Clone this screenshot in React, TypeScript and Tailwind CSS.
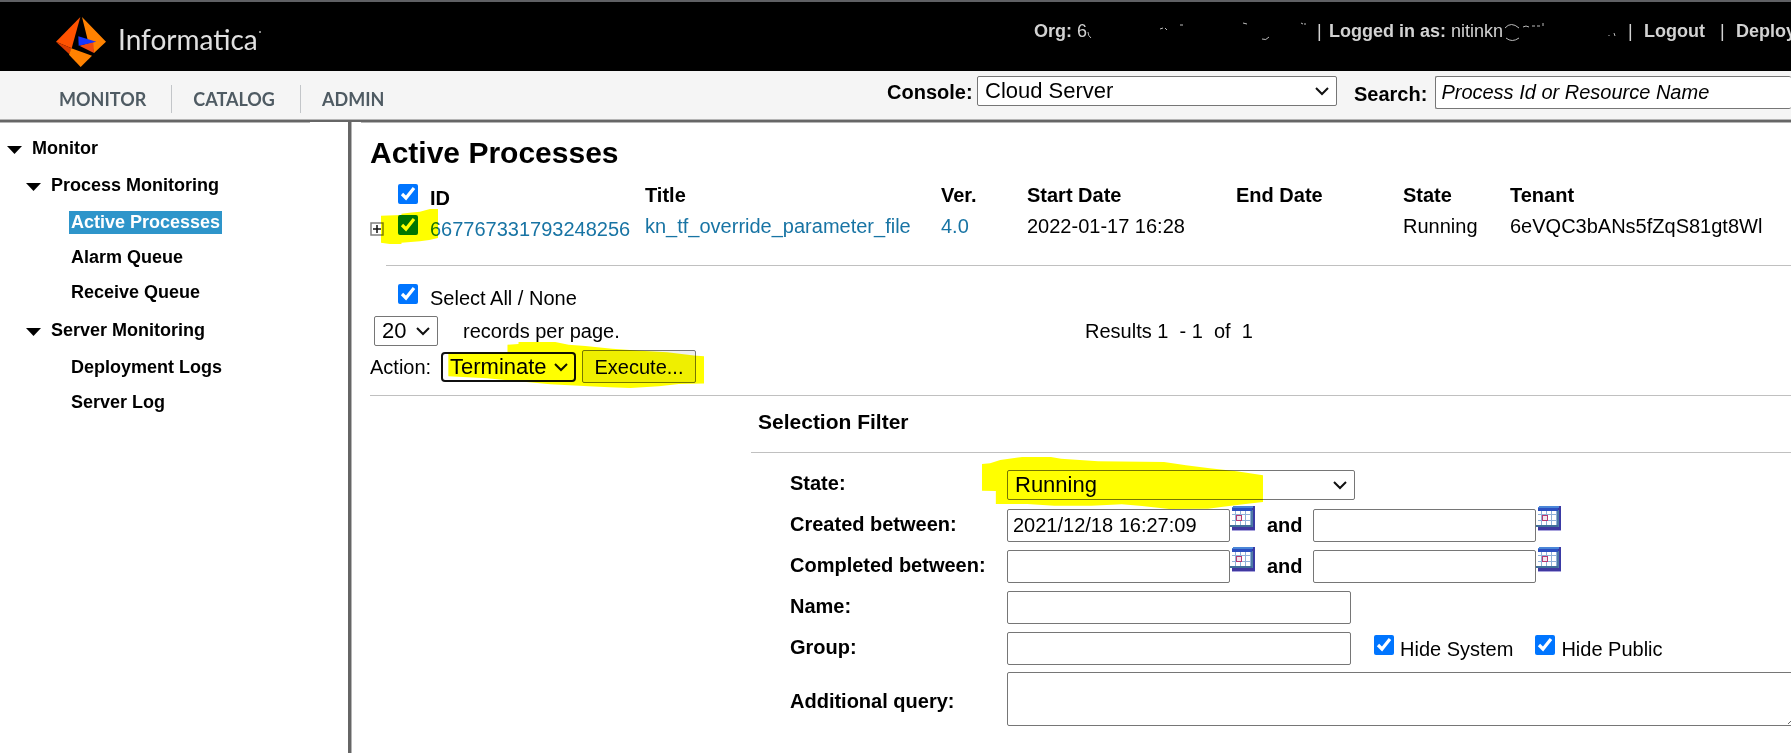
import { useState, type ReactNode } from 'react';

const field = 'border border-[#767676] rounded-xs bg-white text-xl px-[5px] outline-none';

const navLinks = ['MONITOR', 'CATALOG', 'ADMIN'];

const tree = [
  { title: 'Process Monitoring', items: ['Active Processes', 'Alarm Queue', 'Receive Queue'] },
  { title: 'Server Monitoring', items: ['Deployment Logs', 'Server Log'] },
];

const columns = [
  { title: 'Title', width: 'w-[296px]' },
  { title: 'Ver.', width: 'w-[86px]' },
  { title: 'Start Date', width: 'w-[209px]' },
  { title: 'End Date', width: 'w-[167px]' },
  { title: 'State', width: 'w-[107px]' },
  { title: 'Tenant', width: '' },
];

function Logo() {
  return (
    <svg viewBox="0 0 150 150" className="size-[50px]" aria-hidden="true">
      <path d="M73 0 0 74l47 20z" fill="#ff5200" />
      <path d="M0 74l40 38 7-18z" fill="#dc3c00" />
      <path d="M78 0l72 74-36 34-8-36-11-4z" fill="#ff8200" />
      <path d="M70 86l42-12 2 34z" fill="#f04a10" />
      <path d="M67 58l54 16-53 12z" fill="#1437ff" />
      <path d="M46 94l62 22-34 34-35-37z" fill="#ff8200" />
    </svg>
  );
}

function Chevron() {
  return (
    <svg viewBox="0 0 14 9" className="absolute right-2 top-1/2 -mt-1 w-3.5 h-[9px] pointer-events-none" fill="none" stroke="#111" strokeWidth="2" aria-hidden="true">
      <path d="M1 1l6 6 6-6" />
    </svg>
  );
}

function Select({ id, value, className, label }: { id?: string; value: string; className: string; label?: string }) {
  return (
    <span className="relative block shrink-0">
      <select id={id} aria-label={label} defaultValue={value} className={`appearance-none h-[30px] pl-[7px] pr-6 text-[22px] leading-6 bg-white block outline-none ${className}`}>
        <option>{value}</option>
      </select>
      <Chevron />
    </span>
  );
}

function Check({ label, gap, children }: { label?: string; gap: string; children?: ReactNode }) {
  return (
    <label className={`flex items-center ${gap}`}>
      <input type="checkbox" defaultChecked aria-label={label} className="size-5 mb-1 shrink-0" />
      {children && <span className="pt-1">{children}</span>}
    </label>
  );
}

function Caret({ open }: { open: boolean }) {
  return (
    <svg viewBox="0 0 15 8" className={`w-[15px] h-2 mt-1 shrink-0 ${open ? '' : '-rotate-90'}`} aria-hidden="true">
      <path d="M0 0h15L7.500 8z" />
    </svg>
  );
}

function CalendarIcon() {
  return (
    <svg viewBox="0 0 25 25" className="size-[25px]" shapeRendering="crispEdges" aria-hidden="true">
      <path d="M3 0h22v24H2V3z" fill="#3a3aa5" />
      <path d="M3 0h20v2H2z" fill="#4a86d8" />
      <path d="M2 2h20v3H2z" fill="#2c4fc0" />
      <path d="M2 5h19v14H2z" fill="#8fb0d8" />
      <path d="M21 5l2-2v18h-2z" fill="#4f7ba6" />
      <path d="M2 21h21v3H2z" fill="#4038a0" />
      <path d="M0 19h22v2H0z" fill="#416f99" />
      <g fill="#fff">
        <path d="M2 5h3v3H2zM6 5h4v3H6zM11 5h4v3h-4zM16 5h4v3h-4z" />
        <path d="M2 9h3v5H2zM6 9h4v5H6zM11 9h4v5h-4zM16 9h4v5h-4z" />
        <path d="M2 15h3v4H2zM6 15h4v4H6zM11 15h4v4h-4zM16 15h4v4h-4z" />
      </g>
      <path d="M6 9h6v6H6z" fill="#b83a72" />
      <path d="M7 10h4v4H7z" fill="#f3e6ee" />
      <path d="M2 24h23v1H2z" fill="#a9a3dd" />
    </svg>
  );
}

function Marker({ box, points, className }: { box: string; points: string; className: string }) {
  return (
    <svg viewBox={box} preserveAspectRatio="none" className={`absolute mix-blend-multiply pointer-events-none ${className}`} aria-hidden="true">
      <polygon points={points} fill="#ff0" />
    </svg>
  );
}

function DateRange({ label, from }: { label: string; from?: string }) {
  return (
    <>
      <input id={label} type="text" defaultValue={from} className={`${field} w-[223px] h-[33px]`} />
      <button aria-label={`${label} start`} className="self-start pt-px"><CalendarIcon /></button>
      <span className="font-bold pl-3 pr-2.5 pb-0.5">and</span>
      <input type="text" aria-label={`${label} end`} className={`${field} w-[223px] h-[33px]`} />
      <button aria-label={`${label} end date`} className="self-start pt-px"><CalendarIcon /></button>
    </>
  );
}

function FilterRow({ label, htmlFor, children }: { label: string; htmlFor: string; children: ReactNode }) {
  return (
    <div className="flex items-center h-[41px]">
      <label htmlFor={htmlFor} className="w-[217px] shrink-0 font-bold pb-1">{label}</label>
      {children}
    </div>
  );
}

function Header() {
  return (
    <header className="bg-black border-t-2 border-[#5f6064] h-[71px] flex items-center justify-between pl-14 overflow-hidden">
      <div className="flex items-center gap-3 pt-2.5">
        <Logo />
        <span className="flex font-[Lato,sans-serif] text-[28px] leading-8 text-[#e0e0e0] pb-1.5">
          Informatica
          <svg viewBox="0 0 4 32" className="w-1 h-8" aria-hidden="true"><path d="M1 8h2v2H1z" fill="#888" /></svg>
        </span>
      </div>
      <div className="flex shrink-0 text-lg leading-6 text-[#d2d2d2] whitespace-nowrap pb-3 -mr-[5px]">
        <span className="w-[283px] flex">
          <b className="pr-[5px]">Org:</b>6
          <svg viewBox="0 0 222 24" className="w-[222px] h-6" stroke="#bbb" strokeWidth="1" fill="none" aria-hidden="true">
            <path d="M1 13q0 4 3 6M73 10l3-1M78 9l2 2M93 6h3M156 4l4 1M175 20q4 2 7-2M214 4l2 1M218 4v2" />
          </svg>
        </span>
        <span className="w-3">|</span>
        <span className="w-[299px] flex">
          <b className="pr-[5px]">Logged in as:</b>nitinkn
          <svg viewBox="0 0 120 24" className="w-[120px] h-6" stroke="#bbb" strokeWidth="1" fill="none" aria-hidden="true">
            <path d="M2 9q6-7 14 0M3 19q6 5 13 0M20 8q3-2 6 0M29 7h3M34 7h3M40 4v3M106 16v1M111 14l1 3" />
          </svg>
        </span>
        <span className="w-4">|</span>
        <a href="#logout" className="font-bold w-[76px]">Logout</a>
        <span className="w-4">|</span>
        <a href="#deploy" className="font-bold">Deploy</a>
      </div>
    </header>
  );
}

function Toolbar() {
  return (
    <div className="bg-[#f5f5f5] h-12 flex overflow-hidden text-xl">
      <nav className="flex items-center pl-[38px] pt-2 font-[Lato,sans-serif] font-bold text-lg leading-7 text-[#4f5b63]">
        {navLinks.map((n) => (
          <a key={n} href={`#${n.toLowerCase()}`} className="pl-[21px] pr-[25px] border-l border-[#c3c6c9] first:border-l-0">{n}</a>
        ))}
      </nav>
      <div className="ml-auto w-[904px] flex items-start pt-[5px]">
        <label htmlFor="console" className="font-bold w-[90px] shrink-0 leading-8">Console:</label>
        <Select id="console" value="Cloud Server" className="w-[360px] border border-[#767676] rounded-xs" />
        <label htmlFor="search" className="font-bold px-[17px] pr-2 leading-9">Search:</label>
        <input id="search" type="text" placeholder="Process Id or Resource Name" className={`${field} flex-1 min-w-0 h-[33px] border-r-0 italic placeholder:text-black`} />
      </div>
    </div>
  );
}

function Sidebar() {
  const [active, setActive] = useState('Active Processes');
  const [closed, setClosed] = useState<string[]>([]);
  const toggle = (t: string) => setClosed(closed.includes(t) ? closed.filter((c) => c !== t) : [...closed, t]);
  return (
    <aside className="w-[352px] shrink-0 border-r border-[#b5b5b5]">
      <div className="h-full border-r-3 border-[#666]">
        <div className="h-px w-[310px] bg-[#b5b5b5]" />
        <div className="pt-[7px] font-bold text-lg leading-6">
          <button onClick={() => toggle('Monitor')} className="flex items-center gap-2.5 h-[35px] pl-[7px]">
            <Caret open={!closed.includes('Monitor')} />Monitor
          </button>
          {!closed.includes('Monitor') && tree.map((g) => (
            <div key={g.title}>
              <button onClick={() => toggle(g.title)} className="flex items-center gap-2.5 h-10 pl-[26px]">
                <Caret open={!closed.includes(g.title)} />{g.title}
              </button>
              {!closed.includes(g.title) && g.items.map((i) => (
                <div key={i} className="flex items-center h-[35px] pl-[69px]">
                  <a href="#" onClick={() => setActive(i)} className={active === i ? 'px-0.5 leading-[23px] bg-[#2e95ca] text-white' : 'px-0.5 leading-[23px]'}>{i}</a>
                </div>
              ))}
            </div>
          ))}
        </div>
      </div>
    </aside>
  );
}

function ProcessTable() {
  const idCell = 'p-0 h-[31px] text-left';
  const cell = 'p-0 pb-0.5 h-[31px] text-left';
  const link = 'text-[#1874a4]';
  return (
    <table className="table-fixed w-full leading-6">
      <thead>
        <tr>
          <th className={`${idCell} w-[275px]`}><div className="pl-7"><Check gap="gap-3">ID</Check></div></th>
          {columns.map((c) => <th key={c.title} className={`${cell} ${c.width}`}>{c.title}</th>)}
        </tr>
      </thead>
      <tbody>
        <tr>
          <td className={idCell}>
            <div className="relative flex items-center">
              <button aria-label="Expand" className="w-7 pt-1">
                <svg viewBox="0 0 14 14" className="size-3.5" fill="none" aria-hidden="true">
                  <path d="M1 1h12v12H1z" stroke="#808080" strokeWidth="1.500" />
                  <path d="M3 7h8M7 3v8" stroke="#111" strokeWidth="1.500" />
                </svg>
              </button>
              <Check label="Select process" gap="gap-3"><a href="#process" className={link}>667767331793248256</a></Check>
              <Marker className="left-[11px] -top-1 w-[57px] h-[35px]" box="94 255 170 103" points="94,275 155,273 155,269 185,265 210,263 240,255 264,255 264,340 238,346 210,350 155,354 155,358 120,358 94,354" />
            </div>
          </td>
          <td className={cell}><a href="#process" className={link}>kn_tf_override_parameter_file</a></td>
          <td className={cell}><a href="#process" className={link}>4.0</a></td>
          <td className={cell}>2022-01-17 16:28</td>
          <td className={cell}></td>
          <td className={cell}>Running</td>
          <td className={cell}>6eVQC3bANs5fZqS81gt8Wl</td>
        </tr>
      </tbody>
    </table>
  );
}

function SelectionFilter() {
  return (
    <section className="ml-[381px]">
      <h2 className="text-[21px] leading-8 font-bold pl-[7px] pt-2.5 pb-3.5">Selection Filter</h2>
      <hr className="border-[#c0c0c0]" />
      <form className="pl-[39px] pt-[11px]" onSubmit={(e) => e.preventDefault()}>
        <FilterRow label="State:" htmlFor="state">
          <div className="relative">
            <Select id="state" value="Running" className="w-[348px] border border-[#767676] rounded-xs" />
            <Marker className="-left-[25px] -top-[13px] w-[281px] h-[52px]" box="716 171 832 156" points="716,192 740,190 770,180 835,171 920,171 950,176 1060,184 1255,186 1320,196 1390,205 1470,214 1548,226 1548,306 1490,313 1430,320 1385,326 1270,327 1190,318 1130,313 1040,317 930,317 850,312 757,312 757,273 716,272" />
          </div>
        </FilterRow>
        <FilterRow label="Created between:" htmlFor="Created"><DateRange label="Created" from="2021/12/18 16:27:09" /></FilterRow>
        <FilterRow label="Completed between:" htmlFor="Completed"><DateRange label="Completed" /></FilterRow>
        <FilterRow label="Name:" htmlFor="name"><input id="name" type="text" className={`${field} w-[344px] h-[33px]`} /></FilterRow>
        <FilterRow label="Group:" htmlFor="group">
          <input id="group" type="text" className={`${field} w-[344px] h-[33px]`} />
          <div className="flex gap-[22px] pl-[23px] pb-1">
            <Check gap="gap-1.5">Hide System</Check>
            <Check gap="gap-1.5">Hide Public</Check>
          </div>
        </FilterRow>
        <div className="flex items-center pt-[3px] -mr-1.5">
          <label htmlFor="query" className="w-[217px] shrink-0 font-bold pt-1">Additional query:</label>
          <textarea id="query" className={`${field} flex-1 h-[54px] block`} />
        </div>
      </form>
    </section>
  );
}

export default function App() {
  return (
    <div className="bg-white text-black font-['Liberation_Sans',Arial,sans-serif] min-h-screen flex flex-col overflow-hidden">
      <Header />
      <Toolbar />
      <div className="h-[3px] bg-[#666] border-t border-[#b5b5b5] shrink-0" />
      <div className="flex flex-1">
        <Sidebar />
        <main className="flex-1 min-w-0 text-xl leading-6">
          <div className="h-px ml-[9px] bg-[#b5b5b5]" />
          <div className="pl-[18px]">
            <h1 className="text-[30px] leading-10 font-bold pt-2.5 pb-[7px]">Active Processes</h1>
            <ProcessTable />
            <hr className="mt-[23px] ml-4 border-[#c0c0c0]" />
            <div className="pt-3.5 pb-3 flex flex-col gap-1">
              <div className="flex items-center h-8 pl-7"><Check gap="gap-3">Select All / None</Check></div>
              <div className="flex items-center pl-1">
                <Select label="Records per page" value="20" className="w-16 border border-[#767676] rounded-xs" />
                <span className="w-[647px] pl-[25px]">records per page.</span>
                <span className="whitespace-pre">Results 1  - 1  of  1</span>
              </div>
              <div className="relative flex items-center">
                <label htmlFor="action" className="w-[71px]">Action:</label>
                <Select id="action" value="Terminate" className="w-[135px] border-2 border-[#101010] rounded-sm" />
                <button className="ml-1.5 w-[114px] h-[33px] border border-[#767676] rounded-xs bg-[#efefef]">Execute...</button>
                <Marker className="left-[78px] -top-2 w-[256px] h-[46px]" box="294 672 766 136" points="472,680 505,678 505,672 615,672 655,680 705,684 785,692 870,698 950,702 1030,712 1060,714 1060,795 985,796 925,803 840,808 778,806 715,803 600,797 505,788 411,779 295,773 295,704 472,704" />
              </div>
            </div>
            <hr className="border-[#c0c0c0]" />
            <SelectionFilter />
          </div>
        </main>
      </div>
    </div>
  );
}
